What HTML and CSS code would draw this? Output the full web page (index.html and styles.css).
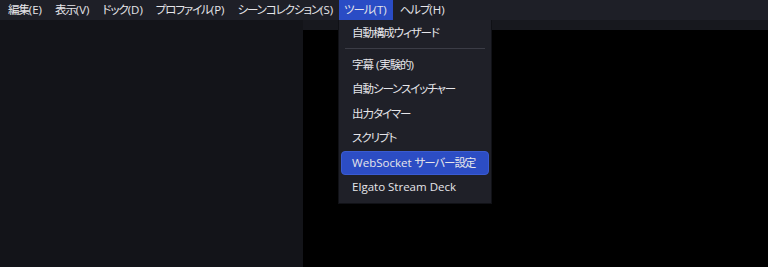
FILE: index.html
```html
<!DOCTYPE html>
<html lang="ja">
  <head>
    <meta charset="UTF-8" />
    <meta name="viewport" content="width=device-width, initial-scale=1.0" />
    <title>OBS</title>
    <link rel="stylesheet" href="styles.css">
  </head>
  <body>
    <div class="menubar">
      <span class="menu"><span class="jp">編集</span>(E)</span>
      <span class="menu"><span class="jp">表示</span>(V)</span>
      <span class="menu"><span class="jp">ドック</span>(D)</span>
      <span class="menu"><span class="jp">プロファイル</span>(P)</span>
      <span class="menu"><span class="jp">シーンコレクション</span>(S)</span>
      <span class="menu active"><span class="jp">ツール</span>(T)
        <div class="dropdown">
          <div class="item"><span class="jp">自動構成ウィザード</span></div>
          <div class="separator"></div>
          <div class="item"><span class="jp">字幕</span> (<span class="jp">実験的</span>)</div>
          <div class="item"><span class="jp">自動シーンスイッチャー</span></div>
          <div class="item"><span class="jp">出力タイマー</span></div>
          <div class="item"><span class="jp">スクリプト</span></div>
          <div class="item selected">WebSocket <span class="jp">サーバー設定</span></div>
          <div class="item">Elgato Stream Deck</div>
        </div>
      </span>
      <span class="menu"><span class="jp">ヘルプ</span>(H)</span>
    </div>

    <div class="main">
      <div class="side"></div>
      <div class="preview-area">
        <div class="preview"></div>
      </div>
    </div>
  </body>
</html>
```

FILE: styles.css
```css
* {
  margin: 0;
  padding: 0;
  box-sizing: border-box;
}

body {
  font-family: "Open Sans", "Noto Sans CJK JP", sans-serif;
  font-size: 11.5px;
  font-feature-settings: "palt";
  background-color: #131419;
  color: #e6e6ea;
  width: 768px;
  height: 267px;
  overflow: hidden;
  display: flex;
  flex-direction: column;
}

/* japanese runs are set tighter, like the narrow UI font */
.jp {
  letter-spacing: -1.1px;
}

.menubar {
  height: 20px;
  background-color: #1e1f27;
  display: flex;
  align-items: stretch;
  padding-left: 1px;
}

.menu {
  position: relative;
  display: flex;
  align-items: center;
  padding: 0 6px 0 7px;
  white-space: nowrap;
  line-height: 20px;
}

.menu.active {
  background-color: #2a4cc5;
  padding: 0 6px 0 5px;
}

.dropdown {
  position: absolute;
  top: 20px;
  left: -1px;
  width: 154px;
  background-color: #1f2028;
  border: 1px solid #101116;
  border-top: none;
  padding: 1px 2px 3px 2px;
  z-index: 10;
}

.item {
  height: 24.5px;
  line-height: 24px;
  padding-left: 11px;
  border-radius: 4px;
  white-space: nowrap;
}

.item.selected {
  background-color: #2c4dc4;
  border: 1px solid #3a5bd2;
  padding-left: 10px;
  line-height: 22px;
}

.separator {
  height: 1px;
  background-color: #3b3c46;
  margin: 2px 4px 4px 4px;
}

.main {
  flex: 1;
  display: flex;
}

.side {
  width: 303px;
  background-color: #131419;
}

.preview-area {
  flex: 1;
  padding-top: 10px;
  background-color: #17181e;
  display: flex;
}

.preview {
  flex: 1;
  background-color: #000;
}
```
